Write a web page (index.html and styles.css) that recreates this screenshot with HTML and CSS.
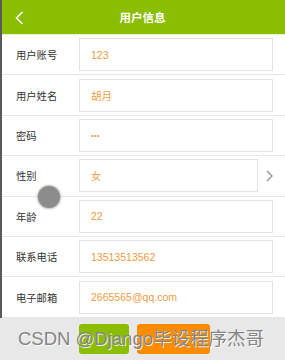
FILE: index.html
```html
<!DOCTYPE html>
<html lang="zh">
<head>
<meta charset="utf-8">
<title>用户信息</title>
<link rel="stylesheet" href="styles.css">
</head>
<body>
<div class="screen">
  <div class="page">
    <header class="topbar">
      <svg class="back" width="9" height="14" viewBox="0 0 9 14"><polyline points="7.5,1 1.5,7 7.5,13" fill="none" stroke="#fff" stroke-width="1.6"/></svg>
      <h1 class="title">用户信息</h1>
    </header>
    <div class="form">
      <div class="row"><span class="label">用户账号</span><div class="field">123</div></div>
      <div class="row"><span class="label">用户姓名</span><div class="field">胡月</div></div>
      <div class="row"><span class="label">密码</span><div class="field dots">•••</div></div>
      <div class="row"><span class="label">性别</span><div class="field short">女</div>
        <svg class="more" width="7" height="12" viewBox="0 0 7 12"><polyline points="1,1 6,6 1,11" fill="none" stroke="#9a9a9a" stroke-width="1.5"/></svg>
      </div>
      <div class="row"><span class="label">年龄</span><div class="field">22</div></div>
      <div class="row"><span class="label">联系电话</span><div class="field">13513513562</div></div>
      <div class="row"><span class="label">电子邮箱</span><div class="field">2665565@qq.com</div></div>
    </div>
  </div>
  <footer class="actions">
    <button class="btn btn-green" aria-label="修改"></button>
    <button class="btn btn-orange" aria-label="退出登录"></button>
  </footer>
  <div class="touch"></div>
  <div class="watermark">CSDN @Django毕设程序杰哥</div>
</div>
</body>
</html>
```
FILE: styles.css
```css
html, body {
  margin: 0;
  padding: 0;
  background: #fff;
}
body {
  font-family: "Liberation Sans", "Noto Sans CJK SC", sans-serif;
  width: 285px;
  height: 360px;
  overflow: hidden;
}
.screen {
  position: relative;
  width: 285px;
  height: 360px;
  display: flex;
  flex-direction: column;
}
.page {
  border-left: 2px solid #5a5a5a;
  display: flex;
  flex-direction: column;
}
.topbar {
  height: 34px;
  background: #8bbd00;
  border-bottom: 1px solid #e9f2c4;
  display: flex;
  align-items: center;
  justify-content: center;
  position: relative;
}
.back {
  position: absolute;
  left: 13px;
  top: 11px;
}
.title {
  margin: 0 0 0 -2px;
  font-size: 11.5px;
  font-weight: bold;
  color: #fff;
  font-family: "Noto Sans CJK SC", sans-serif;
}
.form {
  display: flex;
  flex-direction: column;
}
.row {
  height: 40.4px;
  box-sizing: border-box;
  border-bottom: 1px solid #e6e6e6;
  display: flex;
  align-items: center;
  padding-left: 14px;
}
.label {
  width: 63px;
  font-size: 10.3px;
  color: #333;
  font-family: "Noto Sans CJK SC", sans-serif;
}
.field {
  width: 194px;
  height: 33px;
  box-sizing: border-box;
  border: 1px solid #e2e2e2;
  display: flex;
  align-items: center;
  padding-left: 11px;
  font-size: 10.5px;
  color: #f19b44;
}
.field.short {
  width: 179px;
}
.dots {
  font-size: 7px;
  letter-spacing: 0.5px;
}
.more {
  margin-left: 8px;
}
.actions {
  flex: 1;
  background: #e8e8e8;
  display: flex;
  align-items: flex-start;
  padding: 6px 0 0 79px;
  gap: 8px;
}
.btn {
  height: 30px;
  border: none;
  border-radius: 3px;
  padding: 0;
}
.btn-green {
  width: 50px;
  background: #8bbd00;
}
.btn-orange {
  width: 73px;
  background: #fb8c00;
}
.touch {
  position: absolute;
  left: 38px;
  top: 186px;
  width: 22px;
  height: 22px;
  border-radius: 50%;
  background: #8c8c8c;
  box-shadow: 0 0 2px 1px rgba(140,140,140,0.6);
}
.watermark {
  position: absolute;
  left: 18px;
  top: 328px;
  font-size: 18.5px;
  color: #858585;
  text-shadow: 1px 1px 0 rgba(255,255,255,0.85);
  white-space: nowrap;
  line-height: 22px;
}
```
